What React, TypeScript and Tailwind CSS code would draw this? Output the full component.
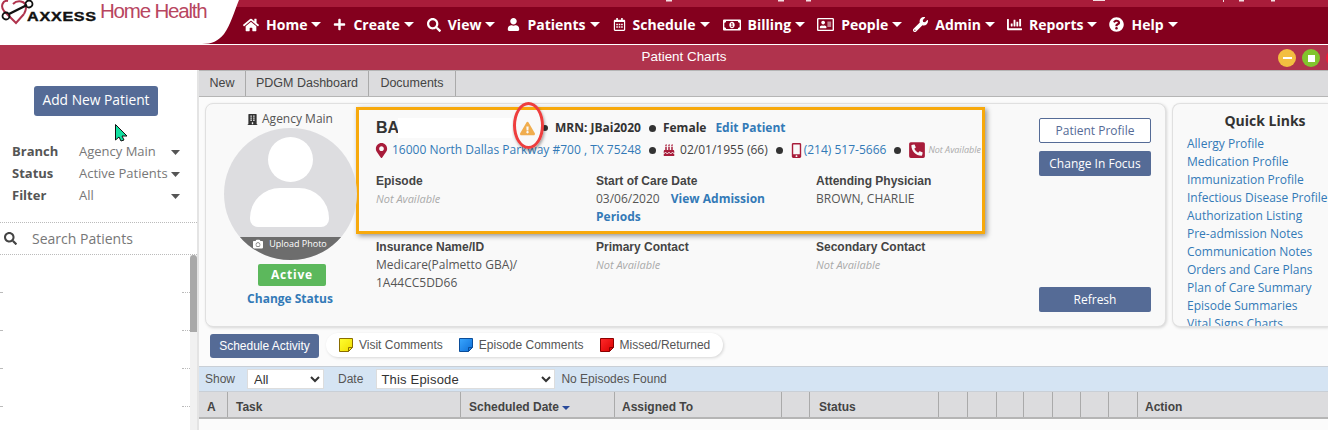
import React from "react";
import {
  FaHome, FaPlus, FaSearch, FaUser, FaRegCalendarAlt, FaRegMoneyBillAlt, FaRegAddressCard, FaWrench,
  FaChartBar, FaQuestionCircle, FaMapMarkerAlt, FaBirthdayCake, FaMobileAlt, FaPhoneSquareAlt, FaBuilding,
  FaCamera, FaExclamationTriangle,
} from "react-icons/fa";

const Caret = () => (
  <svg width="10" height="5" viewBox="0 0 10 5" className="ml-1 shrink-0"><polygon points="0,0 10,0 5,5" fill="currentColor" /></svg>
);

const nav: [any, string, number, number][] = [
  [FaHome, "Home", 16, 12],
  [FaPlus, "Create", 13, 13],
  [FaSearch, "View", 14, 12],
  [FaUser, "Patients", 13, 13],
  [FaRegCalendarAlt, "Schedule", 13, 13],
  [FaRegMoneyBillAlt, "Billing", 18, 12],
  [FaRegAddressCard, "People", 17, 11],
  [FaWrench, "Admin", 15, 12],
  [FaChartBar, "Reports", 15, 12],
  [FaQuestionCircle, "Help", 15, 0],
];

const arial = { fontFamily: '"Liberation Sans", sans-serif' };
const Dot = () => <span className="ml-[8px] mr-[7px] inline-block h-[7px] w-[7px] shrink-0 rounded-full bg-[#333]" />;
const quick = ["Allergy Profile", "Medication Profile", "Immunization Profile", "Infectious Disease Profile", "Authorization Listing", "Pre-admission Notes", "Communication Notes", "Orders and Care Plans", "Plan of Care Summary", "Episode Summaries", "Vital Signs Charts"];

const Field = ({ a, b }: { a: string; b: string }) => (
  <div className="flex h-[22px] items-center">
    <span className="w-[67px] font-bold text-[#555] text-[13px]">{a}</span>
    <span className="w-[92px] text-[#777] text-[13px] whitespace-nowrap">{b}</span>
    <svg width="9" height="5" viewBox="0 0 9 5"><polygon points="0,0 9,0 4.5,5" fill="#555" /></svg>
  </div>
);

const Note = ({ id, c, c2, e, t }: { id: string; c: string; c2: string; e: string; t: string }) => (
  <span className="flex items-center gap-[6px]">
    <svg width="14" height="14" viewBox="0 0 14 14">
      <defs><linearGradient id={id} x1="0" y1="0" x2="1" y2="1"><stop offset="0" stopColor={c2} /><stop offset="1" stopColor={c} /></linearGradient></defs>
      <path d="M.5.5h13v9l-4 4H.5z" fill={`url(#${id})`} stroke={e} /><path d="M9.5 13.5v-4h4" fill="none" stroke={e} />
    </svg>
    {t}
  </span>
);

const Head = ({ t }: { t: string }) => <div className="font-bold text-[#444]" style={arial}>{t}</div>;
const Na = () => <div className="text-[11px] italic text-[#aaa]">Not Available</div>;

export default function App() {
  return (
    <div className="h-[430px] w-[1328px] overflow-hidden bg-white text-[12px] text-[#333]" style={{ fontFamily: '"Open Sans", sans-serif' }}>
      <header className="relative h-[45px] bg-white">
        <div className="h-[7px] bg-[#a81c3a]">
          <svg width="1328" height="2" viewBox="0 0 1328 2" className="block" fill="#fff" opacity="0.85">
            <rect x="666" width="6" height="1.5" /><rect x="778" width="6" height="1.5" /><rect x="806" width="5" height="1.5" />
            <rect x="1093" width="12" height="1" /><rect x="1223" width="1" height="2" /><rect x="1239" width="5" height="1.5" /><rect x="1271" width="4" height="1.5" />
          </svg>
        </div>
        <div className="flex h-[37px] items-center bg-[#84001e] pb-[2px] pl-[243px] font-bold text-[14px] text-white">
          {nav.map(([I, t, s, gap]) => (
            <span key={t} className="flex items-center" style={{ marginRight: gap }}>
              <I size={s} className="mr-[7px]" />
              <span>{t}</span>
              <Caret />
            </span>
          ))}
        </div>
        <svg className="absolute left-0 top-0" width="240" height="44" viewBox="0 0 240 44"><path d="M0 0H239C234 12 231 24 224 34C218 41 212 44 202 44H0Z" fill="#fff" /></svg>
        <div className="absolute left-0 top-0 h-[44px] w-[215px] overflow-hidden">
          <svg className="absolute left-0 top-0" width="36" height="26" viewBox="0 0 36 26" fill="none">
            <path d="M8 1C3 0 0 6 4 11L16 23L24 14" stroke="#b0334d" strokeWidth="2" />
            <path d="M13 4C17 0 26 0 26 8C26 10 25 12 24 14" stroke="#b0334d" strokeWidth="2" />
            <path d="M9 14L27 5" stroke="#111" strokeWidth="2.5" />
            <circle cx="6" cy="16" r="3.5" stroke="#111" strokeWidth="1.8" />
            <circle cx="29" cy="4" r="3.5" stroke="#111" strokeWidth="1.8" />
          </svg>
          <span className="absolute left-[27px] top-[7px] text-[13px] font-bold tracking-[0.6px] text-[#111] [-webkit-text-stroke:0.4px_#111]" style={{ ...arial, transform: "scaleX(1.24)", transformOrigin: "left" }}>AXXESS</span>
          <span className="absolute left-[100px] top-[-4px] text-[20.5px] tracking-[-1.2px] text-[#b8465f]" style={arial}>Home Health</span>
        </div>
      </header>

      <div className="relative flex h-[25px] items-center justify-center bg-[#b0334d] text-[13.4px] text-white" style={arial}>
        <span className="ml-[40px]">Patient Charts</span>
        <span className="absolute left-[1278px] top-[4px] flex h-[18px] w-[18px] items-center justify-center rounded-full bg-[#f3bf40]"><span className="h-[2px] w-[9px] bg-white" /></span>
        <span className="absolute left-[1302px] top-[4px] flex h-[18px] w-[18px] items-center justify-center rounded-full bg-[#82c42d]"><span className="h-[7px] w-[7px] bg-white" /></span>
        <span className="absolute left-[1326px] top-[4px] h-[18px] w-[18px] rounded-full bg-[#ee1c3a]" />
      </div>

      <div className="flex h-[360px]">
        <aside className="relative w-[199px] shrink-0 border-r-2 border-[#e4e4e4]">
          <div className="flex justify-center pr-[5px] pt-[16px]">
            <button className="h-[30px] w-[124px] rounded-[3px] bg-[#556b96] pb-[1px] text-[13.8px] text-white">Add New Patient</button>
          </div>
          <svg className="absolute left-[115px] top-[54px]" width="13" height="18" viewBox="0 0 13 18"><path d="M.5.5V16L4 13l2 4 3-1-2-4h5z" fill="#12e0a0" stroke="#111" /></svg>
          <div className="pl-[12px] pt-[25px]">
            <Field a="Branch" b="Agency Main" />
            <Field a="Status" b="Active Patients" />
            <Field a="Filter" b="All" />
          </div>
          <div className="mt-[15px] flex h-[33px] items-center border-y border-dotted border-[#bbb] pl-[4px] text-[14px] text-[#777]">
            <FaSearch size={13} className="mr-[15px] text-[#444]" />
            <span>Search Patients</span>
          </div>
          <div className="flex">
            <div className="w-[190px]">
              {[0, 1, 2, 3].map((i) => (
                <div key={i} className="flex h-[38px] items-end justify-between">
                  <span className="w-[2px] border-b border-dotted border-[#bbb]" />
                  <span className="w-[8px] border-b border-dotted border-[#bbb]" />
                </div>
              ))}
            </div>
            <div className="h-[175px] w-[7px] bg-[#f1f1f1]">
              <div className="h-[77px] rounded-t-[4px] bg-[#a9a9a9]" />
            </div>
          </div>
        </aside>

        <main className="min-w-0 flex-1 bg-[#fbfbfb]">
          <div className="flex h-[27px] border-y border-[#b5b5b5] bg-[#dcdcde] text-[#444]" style={arial}>
            <span className="flex w-[47px] items-center justify-center border-r border-[#aaa] text-[12.5px]">New</span>
            <span className="flex w-[123px] items-center justify-center border-r border-[#aaa] text-[12.5px]">PDGM Dashboard</span>
            <span className="flex w-[87px] items-center justify-center border-r border-[#aaa] text-[12.5px]">Documents</span>
          </div>

          <div className="flex gap-[6px] pl-[6px] pt-[6px]">
            <section className="relative flex h-[224px] w-[961px] shrink-0 rounded-[8px] border border-[#e0e0e0] bg-[#f9f9f9] pt-[3px] shadow-[1px_1px_3px_rgba(0,0,0,0.15)]">
              <div className="flex w-[150px] shrink-0 flex-col items-center">
                <div className="flex h-[21px] items-end pb-[1px] pl-[18px] text-[12px] leading-[16px] text-[#555]"><FaBuilding size={11} className="mb-[2px] mr-[4px] text-[#333]" />Agency Main</div>
                <div className="relative ml-[18px] h-[132px] w-[133px] overflow-hidden rounded-full bg-[#dddde0]">
                  <div className="absolute left-[44px] top-[9px] h-[45px] w-[45px] rounded-full bg-white" />
                  <div className="absolute left-[26px] top-[60px] h-[39px] w-[79px] rounded-t-[30px] rounded-b-[8px] bg-white" />
                  <div className="absolute bottom-0 left-0 flex h-[23px] w-full items-start justify-center bg-[#6d6d6d] text-[9px] leading-[14px] text-white"><FaCamera size={10} className="mr-[6px] mt-[2px]" />Upload Photo</div>
                </div>
                <div className="ml-[22px] mt-[4px] flex h-[22px] w-[68px] items-center justify-center rounded-[2px] bg-[#5cb85c] pb-[1px] text-[12px] font-bold tracking-[0.8px] text-white">Active</div>
                <a className="ml-[18px] mt-[4px] text-[12px] font-bold leading-[18px] text-[#337ab7]">Change Status</a>
              </div>

              <div className="w-[683px] shrink-0">
                <div className="h-[127px] w-[629px] border-[3px] border-[#f7a90c] bg-[#f9f9f9] pl-[17px] pt-[7px] shadow-[2px_2px_5px_rgba(0,0,0,0.4)]">
                  <div className="flex h-[22px] items-center whitespace-nowrap text-[12px] font-bold">
                    <span className="w-[22px] text-[16px] text-[#333]" style={arial}>BA</span>
                    <span className="h-[20px] w-[114px] bg-white" />
                    <FaExclamationTriangle size={15} className="ml-[8px] text-[#f0ad4e]" />
                    <span className="w-[7px]" />
                    <span className="mr-[6px] inline-block h-[6px] w-[6px] rounded-full bg-[#333]" />
                    <span className="ml-[1px]">MRN: JBai2020</span>
                    <Dot />
                    <span>Female</span>
                    <span className="ml-[9px] text-[#337ab7]">Edit Patient</span>
                  </div>
                  <div className="flex h-[22px] items-center whitespace-nowrap text-[12px] text-[#444]">
                    <FaMapMarkerAlt size={15} className="-ml-[2px] mr-[3px] text-[#a81c3a]" />
                    <span className="text-[#337ab7]">16000 North Dallas Parkway #700 , TX 75248</span>
                    <Dot />
                    <FaBirthdayCake size={12} className="mr-[5px] text-[#a81c3a]" />
                    <span>02/01/1955 (66)</span>
                    <Dot />
                    <FaMobileAlt size={15} className="-ml-[1px] text-[#a81c3a]" />
                    <span className="text-[#337ab7]">(214) 517-5666</span>
                    <Dot />
                    <FaPhoneSquareAlt size={18} className="mr-[2px] text-[#a81c3a]" />
                    <span className="text-[9px] italic text-[#aaa]">Not Available</span>
                  </div>
                  <div className="grid grid-cols-[220px_220px_1fr] pt-[11px] leading-[18px] text-[#555]">
                    <div>
                      <Head t="Episode" />
                      <Na />
                    </div>
                    <div className="pr-[40px]">
                      <Head t="Start of Care Date" />
                      <div>03/06/2020 <a className="ml-[8px] font-bold text-[#337ab7]">View Admission Periods</a></div>
                    </div>
                    <div>
                      <Head t="Attending Physician" />
                      <div>BROWN, CHARLIE</div>
                    </div>
                  </div>
                </div>
                <div className="grid grid-cols-[220px_220px_1fr] pl-[20px] pt-[4px] leading-[18px] text-[#555]">
                  <div>
                    <Head t="Insurance Name/ID" />
                    <div className="w-[150px]">Medicare(Palmetto GBA)/ 1A44CC5DD66</div>
                  </div>
                  <div>
                    <Head t="Primary Contact" />
                    <Na />
                  </div>
                  <div>
                    <Head t="Secondary Contact" />
                    <Na />
                  </div>
                </div>
              </div>

              <div className="flex w-[112px] shrink-0 flex-col pt-[11px] text-[12px]">
                <button className="h-[25px] rounded-[2px] border border-[#556b96] bg-white text-[#556b96]">Patient Profile</button>
                <button className="mt-[8px] h-[25px] rounded-[2px] bg-[#556b96] text-white">Change In Focus</button>
                <button className="mt-[111px] h-[25px] rounded-[2px] bg-[#556b96] text-white">Refresh</button>
              </div>

              <div className="pointer-events-none absolute left-[307px] top-[-2px] h-[47px] w-[31px] rounded-[50%] border-[3px] border-[#ee3e3e] shadow-[1px_2px_3px_rgba(0,0,0,0.35)]" />
            </section>

            <section className="h-[224px] min-w-0 flex-1 overflow-hidden rounded-l-[8px] border border-r-0 border-[#e0e0e0] bg-[#f9f9f9] pl-[14px] shadow-[1px_1px_3px_rgba(0,0,0,0.15)]">
              <div className="flex h-[27px] items-end justify-center pl-[15px] text-[14px] font-bold text-[#333]">Quick Links</div>
              <div className="pt-[4px] text-[12px] leading-[18px] text-[#337ab7]">
                {quick.map((q) => <div key={q} className="whitespace-nowrap">{q}</div>)}
              </div>
            </section>
          </div>

          <div className="flex h-[39px] items-start pl-[11px] pt-[6px]" style={arial}>
            <button className="mt-[1px] h-[24px] w-[109px] rounded-[3px] bg-[#556b96] text-[12px] text-white">Schedule Activity</button>
            <div className="ml-[7px] flex h-[24px] w-[397px] items-center gap-[16px] rounded-full bg-white pl-[13px] text-[12px] text-[#555] shadow-[1px_1px_3px_rgba(0,0,0,0.15)]">
              <Note id="n1" c="#f0dc00" c2="#ffff30" e="#8a6d00" t="Visit Comments" />
              <Note id="n2" c="#0f6fd8" c2="#39a6ff" e="#0b4d99" t="Episode Comments" />
              <Note id="n3" c="#d80000" c2="#ff2a2a" e="#8c0000" t="Missed/Returned" />
            </div>
          </div>

          <div className="flex h-[26px] items-center border-y border-[#c9cfd6] bg-[#d5e4f3] pl-[6px] text-[12px] text-[#555]" style={arial}>
            <span>Show</span>
            <select defaultValue="All" className="ml-[12px] h-[20px] w-[77px] border border-[#ddd] bg-white pl-[2px] text-[13px] text-[#333]"><option>All</option></select>
            <span className="ml-[14px]">Date</span>
            <select defaultValue="This Episode" className="ml-[13px] h-[20px] w-[179px] border border-[#ddd] bg-white text-[13px] tracking-[0.2px] text-[#333]"><option>This Episode</option></select>
            <span className="ml-[6px]">No Episodes Found</span>
          </div>

          <div className="flex h-[27px] border-b-2 border-[#b5b5b5] bg-[#dcdcde] text-[12px] font-bold text-[#444]" style={arial}>
            <span className="flex h-full w-[29px] items-center border-r border-[#aaa] pl-[8px] pt-[4px]">A</span>
            <span className="flex h-full w-[233px] items-center border-r border-[#aaa] pl-[8px] pt-[4px]">Task</span>
            <span className="flex h-full w-[154px] items-center border-r border-[#aaa] pl-[8px] pt-[4px]">Scheduled Date<svg className="ml-[3px] mt-[2px]" width="8" height="4" viewBox="0 0 8 4"><polygon points="0,0 8,0 4,4" fill="#2a4a9a" /></svg></span>
            <span className="flex h-full w-[167px] items-center border-r border-[#aaa] pl-[7px] pt-[4px]">Assigned To</span>
            <span className="h-full w-[28px] border-r border-[#aaa]" />
            <span className="flex h-full w-[129px] items-center border-r border-[#aaa] pl-[9px] pt-[4px]">Status</span>
            {[29, 29, 27, 29, 28, 28, 29].map((w, i) => <span key={i} className="h-full border-r border-[#aaa]" style={{ width: w }} />)}
            <span className="flex h-full items-center pl-[7px] pt-[4px]">Action</span>
          </div>
        </main>
      </div>
    </div>
  );
}
